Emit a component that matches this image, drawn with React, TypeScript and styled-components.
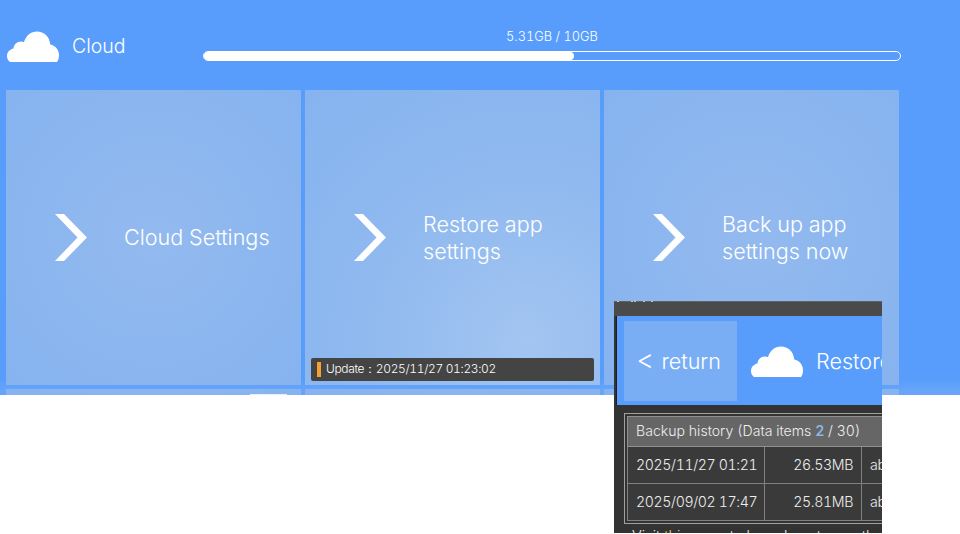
import React from "react";
import styled, { createGlobalStyle } from "styled-components";

const GlobalStyle = createGlobalStyle`
  html, body {
    margin: 0;
    padding: 0;
    background: #ffffff;
  }
  body {
    font-family: "Inter", "Noto Sans", "Liberation Sans", sans-serif;
    font-weight: 300;
    font-variant-numeric: tabular-nums;
    color: #ffffff;
  }
`;

const Page = styled.div`
  position: relative;
  width: 960px;
  height: 534px;
  overflow: hidden;
`;

const BlueArea = styled.div`
  height: 395px;
  overflow: hidden;
  background: linear-gradient(180deg, #589dfb 0%, #589dfb 96%, #68a5fa 99%);
`;

const Header = styled.header`
  height: 90px;
  box-sizing: border-box;
  display: flex;
  align-items: flex-start;
  padding: 30px 59px 0 7px;
`;

const Brand = styled.div`
  width: 196px;
  display: flex;
  align-items: center;
  gap: 13px;
  flex-shrink: 0;
`;

const BrandName = styled.span`
  font-size: 19.5px;
  line-height: 31px;
  padding-top: 1px;
`;

const Usage = styled.div`
  flex: 1;
  display: flex;
  flex-direction: column;
  align-items: center;
  gap: 7px;
`;

const UsageLabel = styled.div`
  font-size: 12.8px;
  line-height: 14px;
`;

const Track = styled.div`
  width: 100%;
  height: 10px;
  box-sizing: border-box;
  border: 1px solid #ffffff;
  border-radius: 5px;
  overflow: hidden;
`;

const Fill = styled.div`
  height: 100%;
  background: #ffffff;
  border-radius: 0 4px 4px 0;
`;

const Grid = styled.div`
  display: grid;
  grid-template-columns: repeat(3, 295px);
  grid-auto-rows: 295px;
  gap: 4px;
  padding-left: 6px;
`;

const Tile = styled.div<{ $glow?: boolean }>`
  position: relative;
  box-sizing: border-box;
  display: flex;
  align-items: center;
  gap: 37px;
  padding-left: 49px;
  background: ${({ $glow }) =>
    $glow
      ? "radial-gradient(circle at 75% 85%, #a3c5f1 0%, #8fb9ef 50%, #86b3ef 100%)"
      : "radial-gradient(circle at 50% 50%, #93baef 0%, #86b3ef 100%)"};
`;

const TileTitle = styled.div`
  font-size: 21.6px;
  line-height: 27px;
  width: 150px;
  white-space: nowrap;
`;

const Chevron = styled.svg`
  width: 32px;
  height: 47px;
  flex-shrink: 0;
`;

const UpdateBar = styled.div`
  position: absolute;
  left: 6px;
  right: 6px;
  bottom: 4px;
  height: 23px;
  box-sizing: border-box;
  display: flex;
  align-items: center;
  gap: 5px;
  padding-left: 6px;
  background: #444444;
  border-radius: 2px;
  font-size: 12px;
  letter-spacing: -0.35px;
`;

const UpdateMark = styled.span`
  width: 4px;
  height: 15px;
  background: #f5a033;
`;

const NextRowTag = styled.div`
  position: absolute;
  top: 5px;
  right: 14px;
  width: 37px;
  height: 6px;
  background: #e6effc;
`;

const Popup = styled.section`
  position: absolute;
  left: 614px;
  top: 301px;
  width: 268px;
  height: 232px;
  overflow: hidden;
  background: #333333;
`;

const PopupTop = styled.div`
  position: relative;
  height: 15px;
  box-sizing: border-box;
  background: #4a4a4a;
  border-top: 1px solid #626262;
`;

/* bottoms of a line of text cut off by the top edge of the popup */
const CutOffMarks = styled.span`
  position: absolute;
  top: -1px;
  left: 3px;
  width: 2px;
  height: 1px;
  background: #c4c4c4;
  box-shadow: 14px 0 #c4c4c4, 17px 0 #c4c4c4, 26px 0 #c4c4c4, 34px 0 #c4c4c4;
`;

const PopupBar = styled.div`
  height: 89px;
  box-sizing: border-box;
  margin-left: 3px;
  padding: 5px 0 0 7px;
  display: flex;
  align-items: flex-start;
  gap: 14px;
  background: #589dfb;
  box-shadow: -1px 0 #1f1f1f;
  white-space: nowrap;
`;

const ReturnButton = styled.div`
  width: 113px;
  height: 80px;
  box-sizing: border-box;
  padding-left: 12px;
  display: flex;
  align-items: center;
  gap: 8px;
  background: #7aaef4;
  font-size: 21.5px;
  flex-shrink: 0;
`;

const ReturnGlyph = styled.span`
  font-size: 27px;
  line-height: 1;
  margin-top: -3px;
`;

const PopupTitle = styled.div`
  display: flex;
  align-items: center;
  gap: 13px;
  height: 80px;
  font-size: 21.6px;
`;

const HistoryBox = styled.div`
  width: 320px;
  margin: 8px 0 0 10px;
  padding: 2px;
  border: 1px solid #a0a0a0;
`;

const HistoryTable = styled.table`
  width: 100%;
  table-layout: fixed;
  border-collapse: collapse;
  font-size: 14.2px;
  color: #eeeeee;
`;

const HeadCell = styled.th`
  height: 30px;
  padding: 0 0 2px 8px;
  box-sizing: border-box;
  text-align: left;
  font-weight: 300;
  font-size: 14.1px;
  background: #666666;
  border: 1px solid #909090;
`;

const Cell = styled.td<{ $right?: boolean }>`
  height: 37px;
  padding: 0 8px 2px;
  box-sizing: border-box;
  text-align: ${({ $right }) => ($right ? "right" : "left")};
  letter-spacing: -0.4px;
  background: #3a3a3a;
  border: 1px solid #808080;
  white-space: nowrap;
  overflow: hidden;
`;

const Count = styled.b`
  color: #8fb6e6;
  font-weight: 600;
`;

const Note = styled.p`
  margin: 3px 0 0 18px;
  font-size: 14.5px;
  line-height: 18px;
  color: #eeeeee;
  white-space: nowrap;
`;

const NoteLink = styled.span`
  color: #f2d76b;
`;

const Cloud = () => (
  <svg width="52" height="31" viewBox="0 0 52 31" aria-hidden="true">
    <path
      fill="#ffffff"
      d="M3 31C1 29.5 0 27.5 0 25C0 21 3 18.2 6.500 17.500C6.800 13.500 10 10.500 14 10.500C15 10.500 16 10.700 17 11.100C19 4.500 24 0.500 30 0.500C37 0.500 42.500 5.500 43.300 13.500C48 14.500 52 18.500 52 24C52 27 51.300 29.500 50 31Z"
    />
  </svg>
);

const Arrow = () => (
  <Chevron viewBox="0 0 32 47" aria-hidden="true">
    <polygon fill="#ffffff" points="0,0 9,0 32,23.500 9,47 0,47 22.500,23.500" />
  </Chevron>
);

export default function App() {
  return (
    <Page>
      <GlobalStyle />
      <BlueArea>
        <Header>
          <Brand>
            <Cloud />
            <BrandName>Cloud</BrandName>
          </Brand>
          <Usage>
            <UsageLabel>5.31GB / 10GB</UsageLabel>
            <Track>
              <Fill style={{ width: `${(5.31 / 10) * 100}%` }} />
            </Track>
          </Usage>
        </Header>
        <Grid>
          <Tile>
            <Arrow />
            <TileTitle>Cloud Settings</TileTitle>
          </Tile>
          <Tile $glow>
            <Arrow />
            <TileTitle>
              Restore app
              <br />
              settings
            </TileTitle>
            <UpdateBar>
              <UpdateMark />
              Update：2025/11/27 01:23:02
            </UpdateBar>
          </Tile>
          <Tile>
            <Arrow />
            <TileTitle>
              Back up app
              <br />
              settings now
            </TileTitle>
          </Tile>
          <Tile>
            <NextRowTag />
          </Tile>
          <Tile />
          <Tile />
        </Grid>
      </BlueArea>
      <Popup>
        <PopupTop>
          <CutOffMarks />
        </PopupTop>
        <PopupBar>
          <ReturnButton>
            <ReturnGlyph>&lt;</ReturnGlyph>
            return
          </ReturnButton>
          <PopupTitle>
            <Cloud />
            Restore app settings
          </PopupTitle>
        </PopupBar>
        <HistoryBox>
          <HistoryTable>
            <colgroup>
              <col style={{ width: 137 }} />
              <col style={{ width: 97 }} />
              <col />
            </colgroup>
            <thead>
              <tr>
                <HeadCell colSpan={3}>
                  Backup history (Data items <Count>2</Count> / 30)
                </HeadCell>
              </tr>
            </thead>
            <tbody>
              <tr>
                <Cell>2025/11/27 01:21</Cell>
                <Cell $right>26.53MB</Cell>
                <Cell>ab</Cell>
              </tr>
              <tr>
                <Cell>2025/09/02 17:47</Cell>
                <Cell $right>25.81MB</Cell>
                <Cell>ab</Cell>
              </tr>
            </tbody>
          </HistoryTable>
        </HistoryBox>
        <Note>
          Visit <NoteLink>this</NoteLink> page to learn how to use the
        </Note>
      </Popup>
    </Page>
  );
}
